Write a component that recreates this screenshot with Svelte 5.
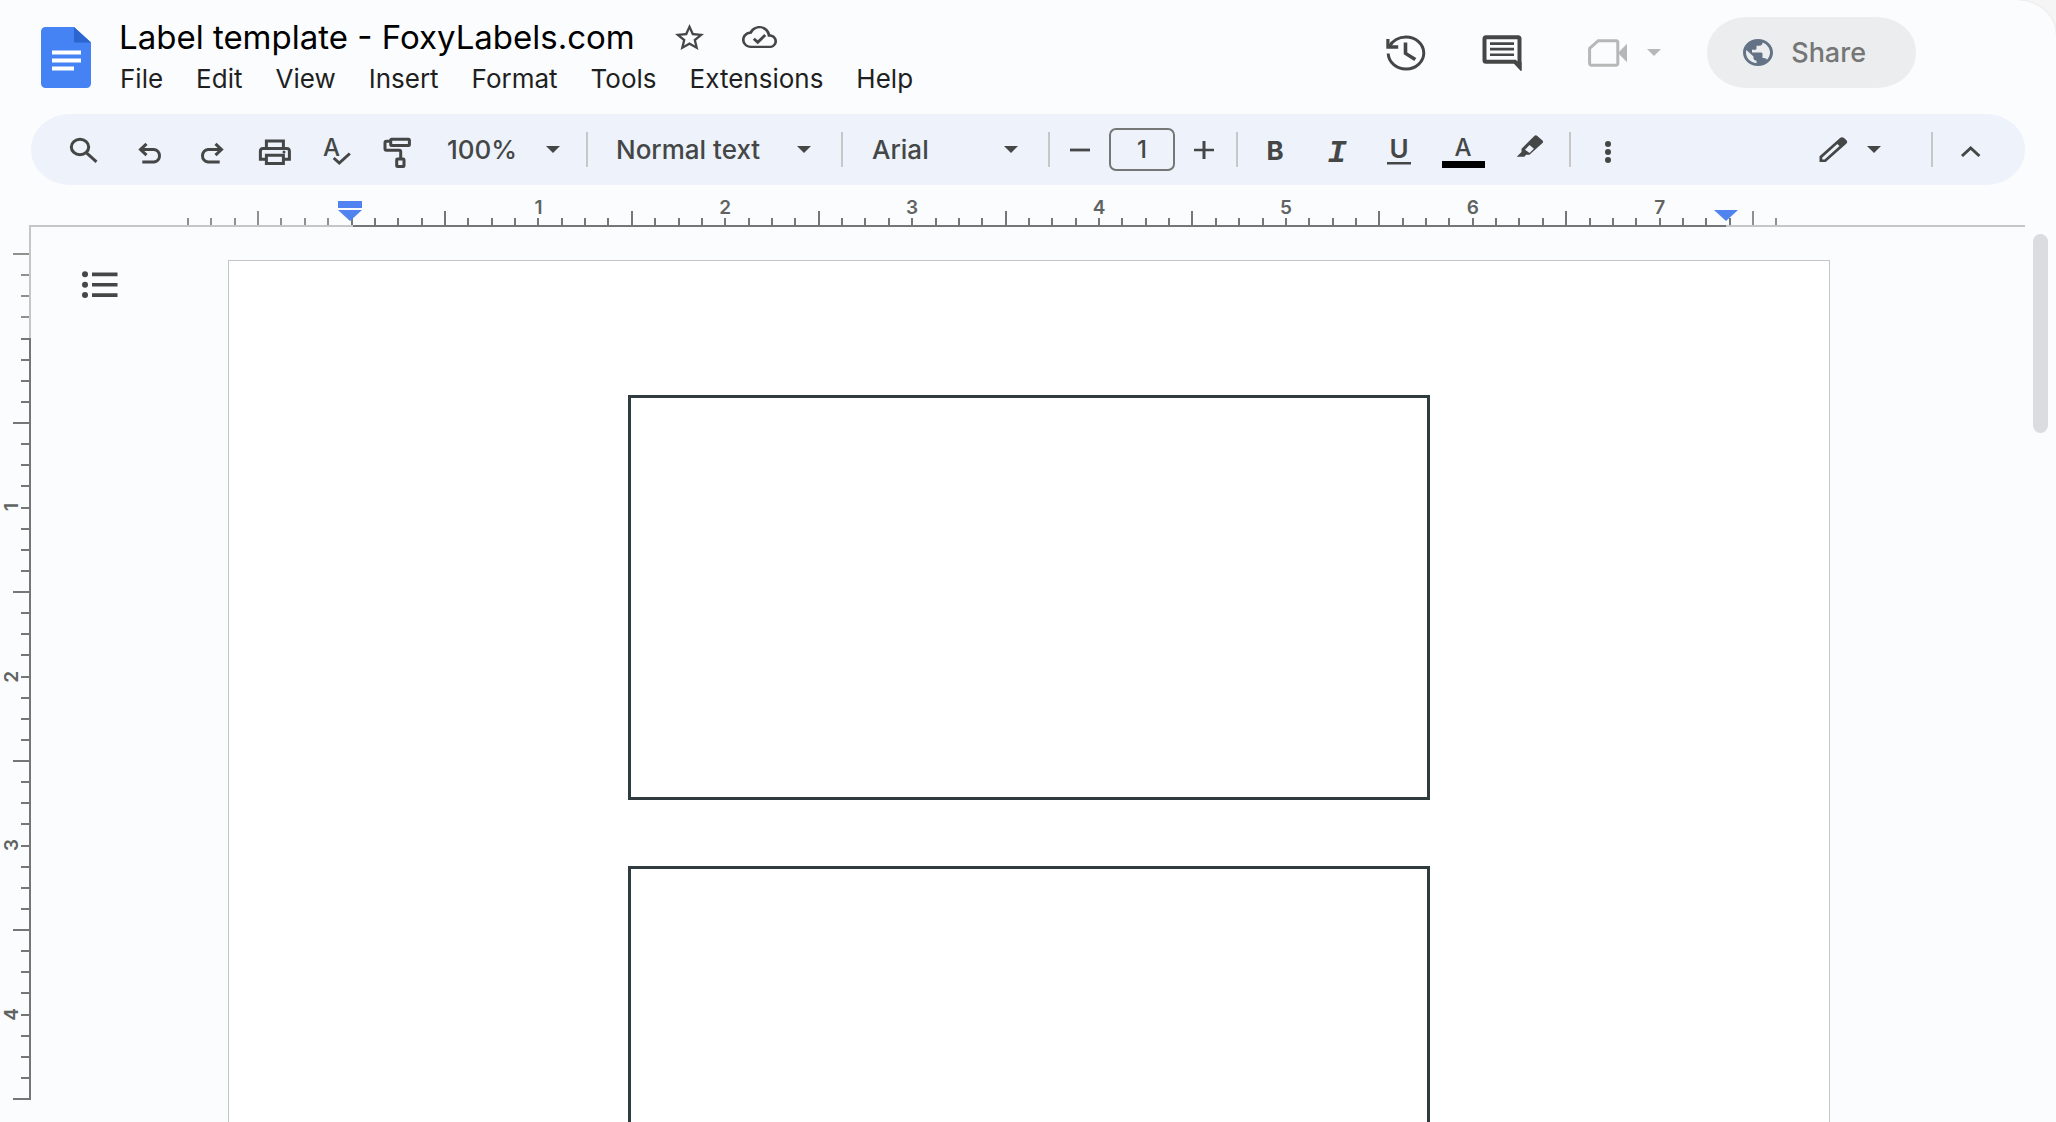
<script lang="ts">
	const menus = ['File', 'Edit', 'View', 'Insert', 'Format', 'Tools', 'Extensions', 'Help'];

	// Ruler ticks are eighths of an inch, counted from the page margin.
	function ticks(from: number, to: number) {
		const list = [];
		for (let n = from; n <= to; n++) {
			list.push({
				n,
				long: Math.abs(n % 8) === 4,
				label: n > 0 && n % 8 === 0 ? String(n / 8) : ''
			});
		}
		return list;
	}

	const across = ticks(-7, 61);
	const down = ticks(-4, 36);

	const leftIndent = 7 / 68;
	const rightIndent = 65.8 / 68;

	let title = $state('Label template - FoxyLabels.com');
	let zoom = $state('100%');
	let paragraph = $state('Normal text');
	let font = $state('Arial');
	let size = $state(1);
</script>

{#snippet caret()}
	<svg class="caret" viewBox="0 0 14 7" aria-hidden="true"><path d="M0 0h14L7 7z" /></svg>
{/snippet}

<div class="app">
	<header class="header">
		<a class="logo" href="#home" aria-label="Docs home">
			<svg viewBox="0 0 50 61" aria-hidden="true">
				<path fill="#4583f4" d="M4.500 0H33l17 15.500V56.500a4.500 4.500 0 0 1-4.500 4.500h-41A4.500 4.500 0 0 1 0 56.500v-52A4.500 4.500 0 0 1 4.500 0z" />
				<path fill="#2c64d0" d="M33 0l17 15.500H33z" />
				<path fill="#fff" d="M11 23.500h29v4H11zm0 8h29v4H11zm0 8h22v4H11z" />
			</svg>
		</a>

		<div class="document">
			<div class="title-row">
				<input class="title" aria-label="Document title" bind:value={title} />
				<button class="plain" aria-label="Star">
					<svg class="star" viewBox="2 2 20 19" preserveAspectRatio="none" aria-hidden="true">
						<path d="M22 9.240l-7.190-.620L12 2 9.190 8.630 2 9.240l5.460 4.730L5.820 21 12 17.270 18.180 21l-1.630-7.030L22 9.240zM12 15.400l-3.760 2.270 1-4.280-3.320-2.880 4.380-.380L12 6.100l1.710 4.040 4.380.380-3.320 2.880 1 4.280L12 15.400z" />
					</svg>
				</button>
				<button class="plain" aria-label="Saved to Drive">
					<svg class="cloud" viewBox="0 4 24 16" preserveAspectRatio="none" aria-hidden="true">
						<path d="M19.350 10.040C18.670 6.590 15.640 4 12 4 9.110 4 6.600 5.640 5.350 8.040 2.340 8.360 0 10.910 0 14c0 3.310 2.690 6 6 6h13c2.760 0 5-2.240 5-5 0-2.640-2.050-4.780-4.650-4.960zM19 18.300H6c-2.400 0-4.200-1.990-4.200-4.300 0-2.050 1.730-3.960 3.760-4.170l1.070-.110.500-.950C8.080 6.940 9.940 5.700 12 5.700c2.620 0 4.880 1.960 5.390 4.530l.300 1.500 1.530.110c1.560.100 2.980 1.510 2.980 3.160 0 1.750-1.350 3.300-3.200 3.300z" />
						<path class="line" stroke-width="1.700" d="M8.100 13.200l2.700 2.600 5.100-5.200" />
					</svg>
				</button>
			</div>
			<nav class="menus" aria-label="Menu bar">
				{#each menus as menu}
					<button class="menu">{menu}</button>
				{/each}
			</nav>
		</div>

		<div class="actions">
			<button class="plain" aria-label="Version history">
				<svg class="action-icon" viewBox="0 0 40 36" aria-hidden="true">
					<path class="line" stroke-width="3.500" d="M2.200 18.500A17.800 16 0 1 0 19.900 2C13 2 6.500 5.600 3.300 11.500" />
					<path d="M.300 4h3.200v6.300h8.700v3.500H.300zM17.700 7.500h3.600v10l9 5.600-2 2.900-10.600-6.700z" />
				</svg>
			</button>
			<button class="plain" aria-label="Comments">
				<svg class="action-icon" viewBox="0 0 40 36" aria-hidden="true">
					<path class="line heavy" d="M4 2.200h32a1.500 1.500 0 0 1 1.500 1.500v28L33 26.800H4a1.500 1.500 0 0 1-1.500-1.500V3.700A1.500 1.500 0 0 1 4 2.200z" />
					<path d="M31 27h8.500v8.500zM8 7.200h24v2.700H8zm0 5.600h24v2.700H8zm0 5.600h24v2.700H8z" />
				</svg>
			</button>
			<button class="plain call" aria-label="Join a call">
				<svg class="camera" viewBox="0 0 39 28" aria-hidden="true">
					<path class="line" d="M10.300 1.700H28a1.800 1.800 0 0 1 1.800 1.800v21a1.800 1.800 0 0 1-1.800 1.800H3.400a1.800 1.800 0 0 1-1.800-1.800v-15z" />
					<path d="M30 14l9-9.300v18.600z" />
				</svg>
				{@render caret()}
			</button>
			<button class="share">
				<svg class="globe" viewBox="2 2 20 20" preserveAspectRatio="none" aria-hidden="true">
					<path d="M12 2C6.480 2 2 6.480 2 12s4.480 10 10 10 10-4.480 10-10S17.520 2 12 2zm-1 17.930c-3.950-.490-7-3.850-7-7.930 0-.620.080-1.210.210-1.790L9 15v1c0 1.100.900 2 2 2v1.930zm6.900-2.540c-.260-.810-1-1.390-1.900-1.390h-1v-3c0-.550-.450-1-1-1H8v-2h2c.550 0 1-.450 1-1V7h2c1.100 0 2-.900 2-2v-.410c2.930 1.190 5 4.060 5 7.410 0 2.080-.800 3.970-2.100 5.390z" />
				</svg>
				Share
			</button>
		</div>
	</header>

	<div class="toolbar" role="toolbar" aria-label="Formatting">
		<button class="tool first" aria-label="Search the menus">
			<svg class="icon" viewBox="0 0 40 40" aria-hidden="true">
				<g class="line">
					<ellipse cx="17" cy="17" rx="8.700" ry="7.700" />
					<path d="M23.500 22.800l10 9" />
				</g>
			</svg>
		</button>
		<button class="tool" aria-label="Undo">
			<svg class="icon" viewBox="0 0 40 40" aria-hidden="true">
				<path class="line" d="M16.500 13.800L10.500 19.500l6 5.700M10.500 19.500H24a6.300 6.300 0 0 1 0 12.500H12.300" />
			</svg>
		</button>
		<button class="tool" aria-label="Redo">
			<svg class="icon" viewBox="0 0 40 40" aria-hidden="true">
				<path class="line" d="M23.500 13.800l6 5.700-6 5.700M29.500 19.500H16a6.300 6.300 0 0 0 0 12.500h11.700" />
			</svg>
		</button>
		<button class="tool" aria-label="Print">
			<svg class="icon" viewBox="0 0 40 40" aria-hidden="true">
				<g class="line">
					<path d="M12.400 18v-7h17v7M12.400 29.200H6.400V21a2.700 2.700 0 0 1 2.700-2.600h23.600a2.700 2.700 0 0 1 2.700 2.600v8.200h-6" />
					<path d="M12.400 25.200h17v8.400h-17z" />
				</g>
				<circle cx="30" cy="22" r="1.500" />
			</svg>
		</button>
		<button class="tool" aria-label="Spelling and grammar check">
			<svg class="icon" viewBox="0 0 40 40" aria-hidden="true">
				<text class="glyph" x="15.600" y="26">A</text>
				<path class="line" d="M17.700 28l5.600 5 10.500-9.500" />
			</svg>
		</button>
		<button class="tool" aria-label="Paint format">
			<svg class="icon" viewBox="0 0 40 40" aria-hidden="true">
				<g class="line">
					<rect x="12.700" y="9.300" width="18.700" height="6.200" rx="1" />
					<path d="M12.700 11.300H8.500a1.500 1.500 0 0 0-1.500 1.500v6a1.500 1.500 0 0 0 1.500 1.500h12.700a1.500 1.500 0 0 1 1.500 1.500v6.500" />
					<rect x="18.700" y="29" width="7.300" height="7.500" rx=".800" />
				</g>
			</svg>
		</button>

		<label class="dropdown zoom">
			<select aria-label="Zoom" bind:value={zoom}>
				<option>50%</option>
				<option>75%</option>
				<option>100%</option>
				<option>150%</option>
			</select>
			{@render caret()}
		</label>
		<span class="divider"></span>
		<label class="dropdown paragraph">
			<select aria-label="Styles" bind:value={paragraph}>
				<option>Normal text</option>
				<option>Title</option>
				<option>Heading 1</option>
			</select>
			{@render caret()}
		</label>
		<span class="divider"></span>
		<label class="dropdown font">
			<select aria-label="Font" bind:value={font}>
				<option>Arial</option>
				<option>Georgia</option>
				<option>Verdana</option>
			</select>
			{@render caret()}
		</label>
		<span class="divider"></span>

		<div class="stepper">
			<button class="plain" aria-label="Decrease font size" onclick={() => (size = Math.max(1, size - 1))}>
				<svg class="step-icon" viewBox="0 0 20 20" aria-hidden="true"><path d="M0 8.600h20v2.800H0z" /></svg>
			</button>
			<input class="size" aria-label="Font size" inputmode="numeric" bind:value={size} />
			<button class="plain" aria-label="Increase font size" onclick={() => (size = size + 1)}>
				<svg class="step-icon" viewBox="0 0 20 20" aria-hidden="true"><path d="M0 8.700h8.500V1h3v7.700H20v2.600h-8.500V19h-3v-7.700H0z" /></svg>
			</button>
		</div>
		<span class="divider"></span>

		<div class="styles">
			<button class="tool" aria-label="Bold">
				<svg class="icon" viewBox="0 0 40 40" aria-hidden="true"><text class="glyph bold" x="20" y="30">B</text></svg>
			</button>
			<button class="tool" aria-label="Italic">
				<svg class="icon" viewBox="0 0 40 40" aria-hidden="true"><text class="glyph italic" x="20" y="32">I</text></svg>
			</button>
			<button class="tool" aria-label="Underline">
				<svg class="icon" viewBox="0 0 40 40" aria-hidden="true">
					<text class="glyph underlined" x="20" y="28">U</text>
					<path d="M8 32h24v2.500H8z" />
				</svg>
			</button>
			<button class="tool wide" aria-label="Text color">
				<svg class="icon" viewBox="0 0 40 40" aria-hidden="true">
					<text class="glyph" x="20" y="26">A</text>
					<path fill="#000" d="M-1 31h43v7H-1z" />
				</svg>
			</button>
			<button class="tool wide" aria-label="Highlight color">
				<svg class="icon" viewBox="0 0 40 40" aria-hidden="true">
					<path fill-rule="evenodd" d="M7.700 26.700l4.800-4.700v-3.200L25.300 6q1.500-1.300 3 0l5.200 4.400q1.200 1.300 0 2.700L20.500 24.800h-3.300l-1.900 1.900zM16 19.800l4.600 3.300 4.300-4.400-4.400-3.600z" />
				</svg>
			</button>
		</div>
		<span class="divider"></span>
		<button class="tool more" aria-label="More">
			<svg class="icon" viewBox="0 0 40 40" aria-hidden="true">
				<circle cx="20" cy="14" r="3" />
				<circle cx="20" cy="22" r="3" />
				<circle cx="20" cy="30" r="3" />
			</svg>
		</button>

		<button class="plain mode" aria-label="Editing mode">
			<svg class="icon" viewBox="0 0 40 40" aria-hidden="true">
				<path fill-rule="evenodd" d="M6.500 32v-5.700L27 8q2-1.700 4 0l2.500 2.200q1.700 1.700 0 3.300L12.700 32zM9.300 29.500h2.200L26.500 16l-2.200-2L9.300 27.500z" />
			</svg>
			{@render caret()}
		</button>
		<span class="divider"></span>
		<button class="tool collapse" aria-label="Hide the menus">
			<svg class="icon" viewBox="0 0 40 40" aria-hidden="true">
				<path class="line" d="M11 26l8.700-8 8.700 8" />
			</svg>
		</button>
	</div>

	<div class="ruler">
		<div class="ruler-track">
			{#each across as tick (tick.n)}
				<div class="mark" class:outside={tick.n < 0 || tick.n > 59}>
					<span class="number">{tick.label}</span>
					<span class="tick" class:long={tick.long}></span>
				</div>
			{/each}
			<svg class="indent" style="left: {leftIndent * 100}%" viewBox="0 0 24 20" aria-hidden="true">
				<path d="M0 0h24v7H0zM0 9h24L12 20z" />
			</svg>
			<svg class="indent" style="left: {rightIndent * 100}%" viewBox="0 0 24 20" aria-hidden="true">
				<path d="M0 9h24L12 20z" />
			</svg>
		</div>
		<div class="ruler-line">
			<span class="start"></span>
			<span class="body"></span>
			<span class="end"></span>
		</div>
	</div>

	<div class="workspace">
		<div class="side-ruler">
			<div class="side-track">
				{#each down as tick (tick.n)}
					<div class="mark" class:outside={tick.n < 0}>
						<span class="number">{tick.label}</span>
						<span class="tick" class:long={tick.long}></span>
					</div>
				{/each}
			</div>
			<div class="side-line">
				<span class="start"></span>
				<span class="body"></span>
			</div>
		</div>

		<main class="canvas">
			<aside class="outline">
				<button class="plain" aria-label="Show document outline">
					<svg class="outline-icon" viewBox="0 0 36 27" aria-hidden="true">
						<circle cx="3" cy="3.300" r="3" />
						<circle cx="3" cy="13.700" r="3" />
						<circle cx="3" cy="24" r="3" />
						<path d="M10 1.500h25.500v3.700H10zm0 10.400h25.500v3.700H10zm0 10.300h25.500v3.700H10z" />
					</svg>
				</button>
			</aside>
			<article class="page" aria-label="Document page">
				<div class="label"></div>
				<div class="label"></div>
			</article>
		</main>

		<div class="scrollbar"><div class="thumb"></div></div>
	</div>
</div>

<style>
	:global(body) {
		background: #f5f5f5;
	}

	.app {
		display: flex;
		flex-direction: column;
		height: 100vh;
		overflow: hidden;
		box-sizing: border-box;
		background: #fafcfe;
		border-top-right-radius: 39px 35px;
		box-shadow: 0 0 2px #d8d8d8;
		color: #444746;
		font-family: Inter, 'Open Sans', sans-serif;
		font-size: 26px;
	}

	button,
	input,
	select {
		margin: 0;
		padding: 0;
		border: 0;
		background: none;
		color: inherit;
		font: inherit;
	}

	button {
		cursor: pointer;
	}

	svg {
		display: block;
		flex: none;
		fill: currentColor;
	}

	.line {
		fill: none;
		stroke: currentColor;
		stroke-width: 3;
	}

	.line.heavy {
		stroke-width: 4;
	}

	.cloud .line {
		stroke-width: 2;
	}

	.plain {
		display: flex;
		align-items: center;
	}

	.caret {
		width: 14px;
		height: 7px;
	}

	/* Header */
	.header {
		display: flex;
		align-items: flex-start;
		flex: none;
		height: 114px;
		padding: 0 140px 0 41px;
		box-sizing: border-box;
	}

	.logo {
		margin-top: 27px;
	}

	.logo svg {
		width: 50px;
		height: 61px;
	}

	.document {
		margin: 16px 0 0 28px;
	}

	.title-row {
		display: flex;
		align-items: center;
		height: 42px;
	}

	.title {
		width: 556px;
		height: 42px;
		color: #000;
		font-size: 33px;
		line-height: 42px;
	}

	.star {
		width: 29px;
		height: 26px;
	}

	.cloud {
		width: 35px;
		height: 22px;
		margin-left: 38px;
	}

	.menus {
		display: flex;
		gap: 33px;
		padding-left: 1px;
	}

	.menu {
		color: #1f1f1f;
		line-height: 42px;
	}

	.actions {
		display: flex;
		align-items: center;
		height: 71px;
		margin: 17px 0 0 auto;
	}

	.actions .plain {
		margin-right: 56px;
	}

	.action-icon {
		width: 40px;
		height: 36px;
	}

	.actions .call {
		gap: 20px;
		margin: 0 46px 0 10px;
		color: #b5b8b6;
	}

	.camera {
		width: 39px;
		height: 28px;
	}

	.share {
		display: flex;
		align-items: center;
		gap: 18px;
		height: 71px;
		padding: 0 50px 0 36px;
		border-radius: 39px / 35px;
		background: #ebedee;
		color: #747775;
		font-size: 27px;
		font-weight: 500;
	}

	.globe {
		width: 30px;
		height: 27px;
		color: #647286;
	}

	/* Toolbar */
	.toolbar {
		display: flex;
		align-items: center;
		flex: none;
		height: 71px;
		margin: 0 31px;
		padding: 0 16px;
		box-sizing: border-box;
		border-radius: 39px / 35px;
		background: #edf2fb;
	}

	.tool {
		display: flex;
		align-items: center;
		justify-content: center;
		flex: none;
		width: 62px;
		height: 62px;
	}

	.tool.first {
		width: 72px;
	}

	.tool.wide {
		width: 66px;
	}

	.tool.more {
		margin-left: 6px;
	}

	.tool.collapse {
		width: 76px;
	}

	.icon {
		width: 40px;
		height: 40px;
		overflow: visible;
	}

	.glyph {
		font-size: 24px;
		font-weight: 500;
		text-anchor: middle;
	}

	.glyph.bold {
		font-size: 26px;
		font-weight: 700;
	}

	.glyph.italic {
		font-family: 'Liberation Mono', monospace;
		font-size: 32px;
		font-style: italic;
		font-weight: 700;
	}

	.glyph.underlined {
		font-size: 26px;
		font-weight: 600;
	}

	.divider {
		flex: none;
		width: 2px;
		height: 35px;
		background: #c7c7c7;
	}

	.dropdown {
		display: grid;
		align-items: center;
		flex: none;
	}

	.dropdown select,
	.dropdown .caret {
		grid-area: 1 / 1;
	}

	.dropdown select {
		width: 100%;
		height: 42px;
		font-weight: 500;
		appearance: none;
		cursor: pointer;
	}

	.dropdown .caret {
		justify-self: end;
		pointer-events: none;
	}

	.dropdown.zoom {
		width: 113px;
		margin: 0 26px 0 18px;
	}

	.dropdown.paragraph {
		width: 195px;
		margin: 0 30px 0 28px;
	}

	.dropdown.font {
		width: 146px;
		margin: 0 30px 0 29px;
	}

	.stepper {
		display: flex;
		align-items: center;
		gap: 19px;
		margin: 0 22px 0 20px;
	}

	.step-icon {
		width: 20px;
		height: 20px;
	}

	.size {
		width: 66px;
		height: 43px;
		box-sizing: border-box;
		border: 2px solid #747775;
		border-radius: 7px;
		font-size: 24px;
		font-weight: 500;
		text-align: center;
	}

	.styles {
		display: flex;
		margin: 0 7px 0 6px;
	}

	.mode {
		gap: 14px;
		margin: 0 50px 0 auto;
	}

	/* Rulers */
	.ruler {
		flex: none;
	}

	.ruler-track {
		position: relative;
		display: flex;
		align-items: flex-end;
		justify-content: space-between;
		width: 1591px;
		height: 40px;
		margin-left: 187px;
	}

	.mark {
		display: flex;
		align-items: center;
	}

	.number {
		color: #5f6361;
		font-size: 19px;
		font-weight: 600;
		line-height: 20px;
	}

	.tick {
		flex: none;
		background: #747775;
	}

	.outside .tick {
		background: #8f918f;
	}

	.ruler-track .mark {
		flex-direction: column;
		width: 2px;
	}

	.ruler-track .tick {
		width: 2px;
		height: 7px;
	}

	.ruler-track .long {
		height: 14px;
	}

	.indent {
		position: absolute;
		bottom: 4px;
		width: 24px;
		height: 20px;
		margin-left: -13px;
		fill: #5083ef;
	}

	.ruler-line {
		display: flex;
		height: 2px;
		margin: 0 31px 0 29px;
	}

	.start,
	.end {
		background: #c4c7c5;
	}

	.body {
		background: #747775;
	}

	.ruler-line .start {
		width: 324px;
	}

	.ruler-line .body {
		width: 1373px;
	}

	.ruler-line .end {
		flex: 1;
	}

	.workspace {
		display: flex;
		flex: 1;
		min-height: 0;
	}

	.side-ruler {
		display: flex;
		flex: none;
		width: 31px;
	}

	.side-track {
		display: flex;
		flex-direction: column;
		justify-content: space-between;
		width: 29px;
		height: 847px;
		padding-top: 26px;
	}

	.side-track .mark {
		justify-content: flex-end;
		height: 2px;
	}

	.side-track .number {
		width: 19px;
		line-height: 19px;
		writing-mode: vertical-rl;
		transform: rotate(180deg);
	}

	.side-track .tick {
		width: 8px;
		height: 2px;
	}

	.side-track .number:empty {
		width: 0;
	}

	.side-track .long {
		width: 16px;
	}

	.side-line {
		display: flex;
		flex-direction: column;
		width: 2px;
		height: 873px;
	}

	.side-line .start {
		height: 111px;
	}

	.side-line .body {
		flex: 1;
	}

	/* Document */
	.canvas {
		display: grid;
		grid-template-columns: 1fr auto 1fr;
		flex: 1;
		min-width: 0;
		padding-top: 33px;
		overflow: hidden;
	}

	.outline {
		padding: 11px 0 0 51px;
	}

	.outline-icon {
		width: 36px;
		height: 27px;
	}

	.page {
		display: flex;
		flex-direction: column;
		align-items: center;
		gap: 66px;
		width: 1602px;
		padding-top: 134px;
		box-sizing: border-box;
		border: 1px solid #c4c7c5;
		background: #fff;
	}

	.label {
		flex: none;
		width: 802px;
		height: 405px;
		box-sizing: border-box;
		border: 3px solid #303b40;
	}

	.scrollbar {
		flex: none;
		width: 29px;
	}

	.thumb {
		width: 15px;
		height: 199px;
		margin: 7px 0 0 6px;
		border-radius: 8px;
		background: #dadce0;
	}
</style>
